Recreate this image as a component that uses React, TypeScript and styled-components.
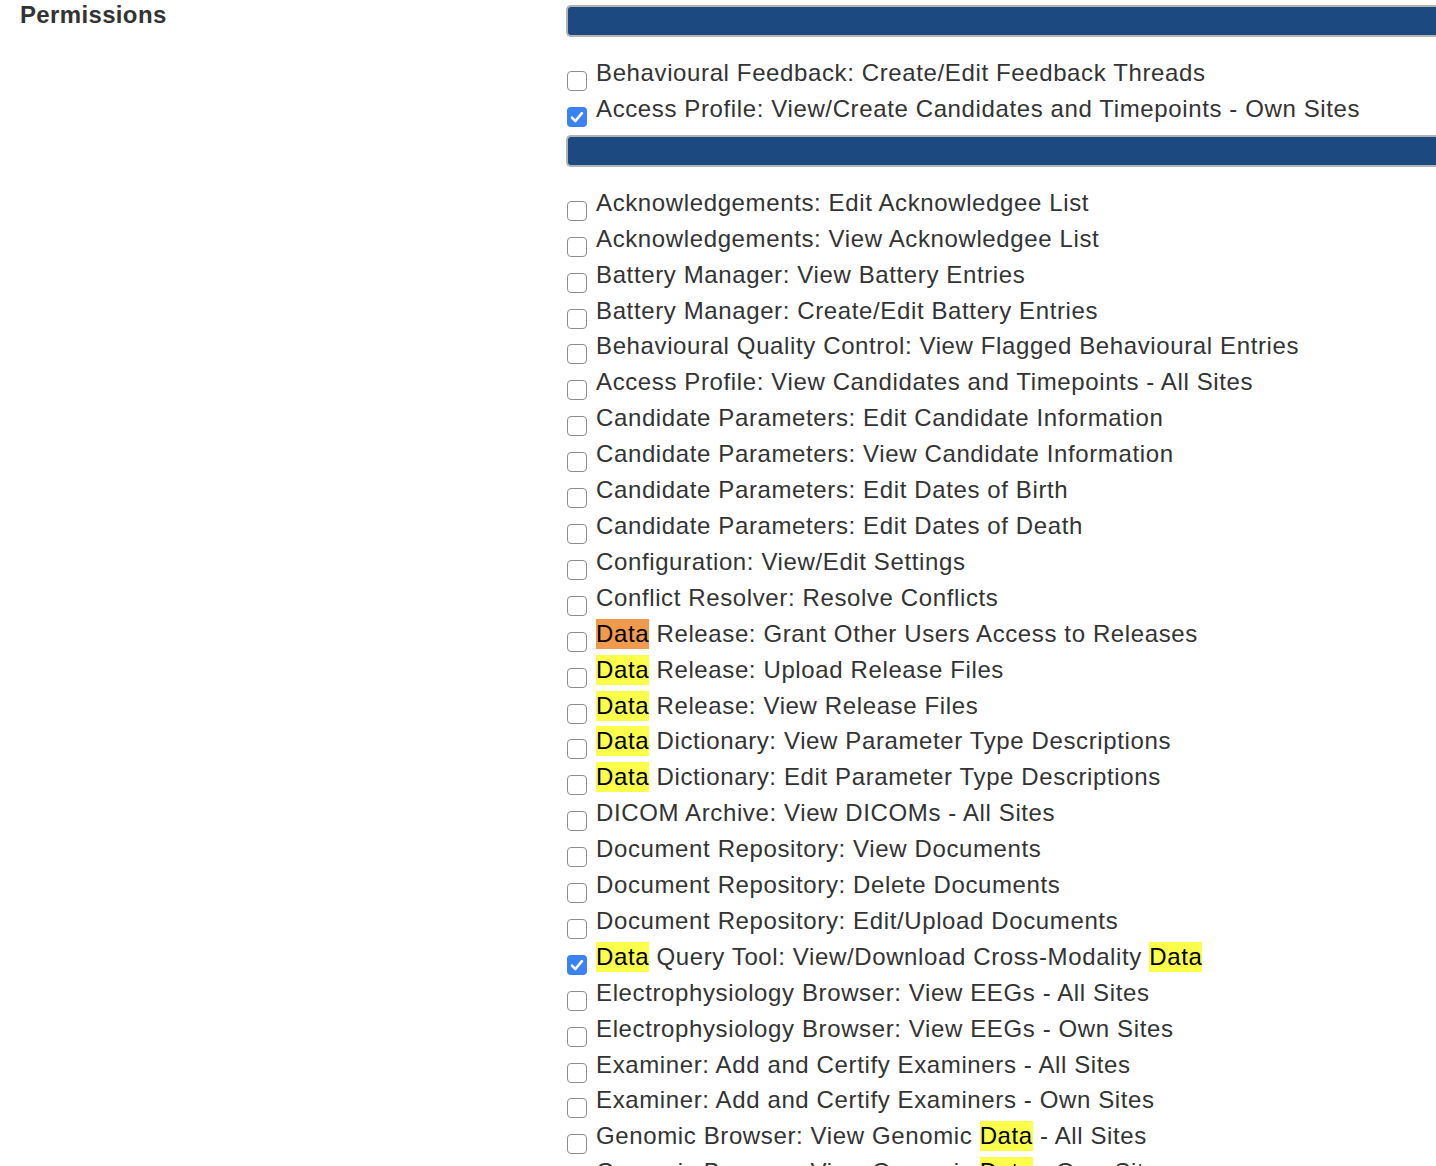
import React from 'react';
import styled, { createGlobalStyle } from 'styled-components';

const GlobalStyle = createGlobalStyle`
  html, body {
    margin: 0;
    padding: 0;
    background: #fff;
    overflow: hidden;
  }
  body {
    font-family: 'Liberation Sans', Arial, sans-serif;
    color: #333;
  }
`;

const FormRow = styled.div`
  display: grid;
  grid-template-columns: 546px 1fr;
  width: 1500px;
  padding-left: 20px;
`;

const Label = styled.div`
  font-size: 24px;
  line-height: 30px;
  font-weight: bold;
  letter-spacing: 0.35px;
  color: #333;
`;

const Column = styled.div`
  display: flex;
  flex-direction: column;
`;

const Group = styled.div`
  display: flex;
  flex-direction: column;
  padding-bottom: 3px;
`;

const GroupBar = styled.div`
  box-sizing: border-box;
  height: 32px;
  margin-top: 5px;
  margin-bottom: 18px;
  background: #1c4a80;
  border: 2px solid #b3b3b3;
  border-right: none;
  border-radius: 5px 0 0 5px;
`;

const Row = styled.label`
  display: flex;
  align-items: flex-start;
  height: 35.92px;
  font-size: 24px;
  line-height: 36px;
  letter-spacing: 0.62px;
  color: #333;
  white-space: nowrap;
`;

const Box = styled.span<{ $checked?: boolean }>`
  box-sizing: border-box;
  flex: none;
  width: 20px;
  height: 20px;
  margin: 16px 9px 0 1px;
  border-radius: 4px;
  border: ${(p) => (p.$checked ? 'none' : '1.5px solid #8d8d8d')};
  background: ${(p) => (p.$checked ? '#3b82f6' : '#fff')};
  display: flex;
  align-items: center;
  justify-content: center;
`;

const Mark = styled.mark<{ $active?: boolean }>`
  background: ${(p) => (p.$active ? '#ef9a4d' : '#fbff4c')};
  color: #000;
  padding: 1px 0 2px;
`;

type Part = string | { hl: string; active?: boolean };
type Perm = { parts: Part[]; checked?: boolean };

const D = (active?: boolean): Part => ({ hl: 'Data', active });

const groups: Perm[][] = [
  [
    { parts: ['Behavioural Feedback: Create/Edit Feedback Threads'] },
    { parts: ['Access Profile: View/Create Candidates and Timepoints - Own Sites'], checked: true },
  ],
  [
    { parts: ['Acknowledgements: Edit Acknowledgee List'] },
    { parts: ['Acknowledgements: View Acknowledgee List'] },
    { parts: ['Battery Manager: View Battery Entries'] },
    { parts: ['Battery Manager: Create/Edit Battery Entries'] },
    { parts: ['Behavioural Quality Control: View Flagged Behavioural Entries'] },
    { parts: ['Access Profile: View Candidates and Timepoints - All Sites'] },
    { parts: ['Candidate Parameters: Edit Candidate Information'] },
    { parts: ['Candidate Parameters: View Candidate Information'] },
    { parts: ['Candidate Parameters: Edit Dates of Birth'] },
    { parts: ['Candidate Parameters: Edit Dates of Death'] },
    { parts: ['Configuration: View/Edit Settings'] },
    { parts: ['Conflict Resolver: Resolve Conflicts'] },
    { parts: [D(true), ' Release: Grant Other Users Access to Releases'] },
    { parts: [D(), ' Release: Upload Release Files'] },
    { parts: [D(), ' Release: View Release Files'] },
    { parts: [D(), ' Dictionary: View Parameter Type Descriptions'] },
    { parts: [D(), ' Dictionary: Edit Parameter Type Descriptions'] },
    { parts: ['DICOM Archive: View DICOMs - All Sites'] },
    { parts: ['Document Repository: View Documents'] },
    { parts: ['Document Repository: Delete Documents'] },
    { parts: ['Document Repository: Edit/Upload Documents'] },
    { parts: [D(), ' Query Tool: View/Download Cross-Modality ', D()], checked: true },
    { parts: ['Electrophysiology Browser: View EEGs - All Sites'] },
    { parts: ['Electrophysiology Browser: View EEGs - Own Sites'] },
    { parts: ['Examiner: Add and Certify Examiners - All Sites'] },
    { parts: ['Examiner: Add and Certify Examiners - Own Sites'] },
    { parts: ['Genomic Browser: View Genomic ', D(), ' - All Sites'] },
    { parts: ['Genomic Browser: View Genomic ', D(), ' - Own Sites'] },
  ],
];

const Check = () => (
  <svg width="16" height="16" viewBox="0 0 16 16">
    <path d="M3 8.6 L6.4 12 L13 4.2" fill="none" stroke="#fff" strokeWidth="2.6" strokeLinecap="round" strokeLinejoin="round" />
  </svg>
);

const PermissionRow: React.FC<{ perm: Perm }> = ({ perm }) => (
  <Row>
    <Box $checked={perm.checked}>{perm.checked && <Check />}</Box>
    <span>
      {perm.parts.map((p, i) =>
        typeof p === 'string' ? (
          <React.Fragment key={i}>{p}</React.Fragment>
        ) : (
          <Mark key={i} $active={p.active}>
            {p.hl}
          </Mark>
        )
      )}
    </span>
  </Row>
);

const App: React.FC = () => (
  <>
    <GlobalStyle />
    <FormRow>
      <Label>Permissions</Label>
      <Column>
        {groups.map((g, gi) => (
          <Group key={gi}>
            <GroupBar />
            {g.map((perm, i) => (
              <PermissionRow key={i} perm={perm} />
            ))}
          </Group>
        ))}
      </Column>
    </FormRow>
  </>
);

export default App;
